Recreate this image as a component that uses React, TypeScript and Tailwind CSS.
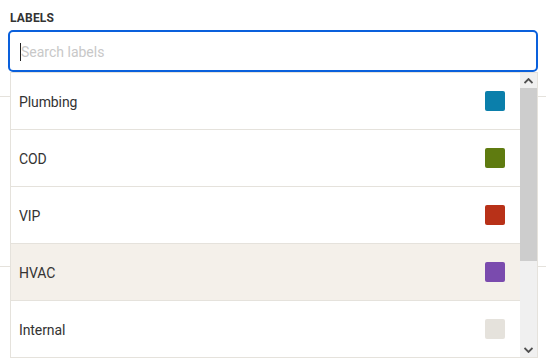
import React from "react";

const labels = [
  { name: "Plumbing", color: "bg-[#0b7fab]" },
  { name: "COD", color: "bg-[#5f7b10]" },
  { name: "VIP", color: "bg-[#b83118]" },
  { name: "HVAC", color: "bg-[#7a4bae]", active: true },
  { name: "Internal", color: "bg-[#e5e2dc]" },
];

export default function App() {
  return (
    <div className="w-[546px] h-[364px] bg-white overflow-hidden font-['Roboto',sans-serif] text-[#333]">
      <div className="relative pt-[11px]">
        <div className="px-[10px] text-[12px] font-bold leading-[14px] tracking-[0.2px] text-[#333]">LABELS</div>
        <div className="mx-[8px] mt-[5px] h-[42px] rounded-[5px] border-2 border-[#0a60dc] flex items-center pl-[10px] pt-[2px] text-[14px]">
          <span className="w-px h-[18px] bg-[#222]" />
          <span className="text-[#c8c8c8]">Search labels</span>
        </div>
        <div className="h-[25px] border-b border-[#e5e2dc]" />
        <div className="h-[170px] border-b border-[#e5e2dc]" />

        <div className="absolute left-[10px] top-[72px] w-[528px] h-[286px] border border-[#e5e2dc] bg-white flex">
          <div className="flex-1 flex flex-col">
            {labels.map((l) => (
              <div
                key={l.name}
                className={`h-[57px] shrink-0 border-b border-[#e5e2dc] flex items-center justify-between pl-[8px] pr-[15px] text-[14px] text-[#333] ${l.active ? "bg-[#f4f0ea]" : "bg-white"}`}
              >
                <span className="pt-[2px] tracking-[-0.1px]">{l.name}</span>
                <span className={`w-[20px] h-[20px] rounded-[2px] ${l.color}`} />
              </div>
            ))}
          </div>
          <div className="w-[17px] bg-[#f0f0f0] flex flex-col">
            <div className="h-[15px] flex items-center justify-center">
              <svg width="9" height="6" viewBox="0 0 9 6">
                <path d="M0.5 5 L4.5 1 L8.5 5" stroke="#505050" strokeWidth="1.8" fill="none" />
              </svg>
            </div>
            <div className="h-[173px] bg-[#cdcdcd]" />
            <div className="flex-1" />
            <div className="h-[15px] flex items-center justify-center">
              <svg width="9" height="6" viewBox="0 0 9 6">
                <path d="M0.5 1 L4.5 5 L8.5 1" stroke="#505050" strokeWidth="1.8" fill="none" />
              </svg>
            </div>
          </div>
        </div>
      </div>
    </div>
  );
}
